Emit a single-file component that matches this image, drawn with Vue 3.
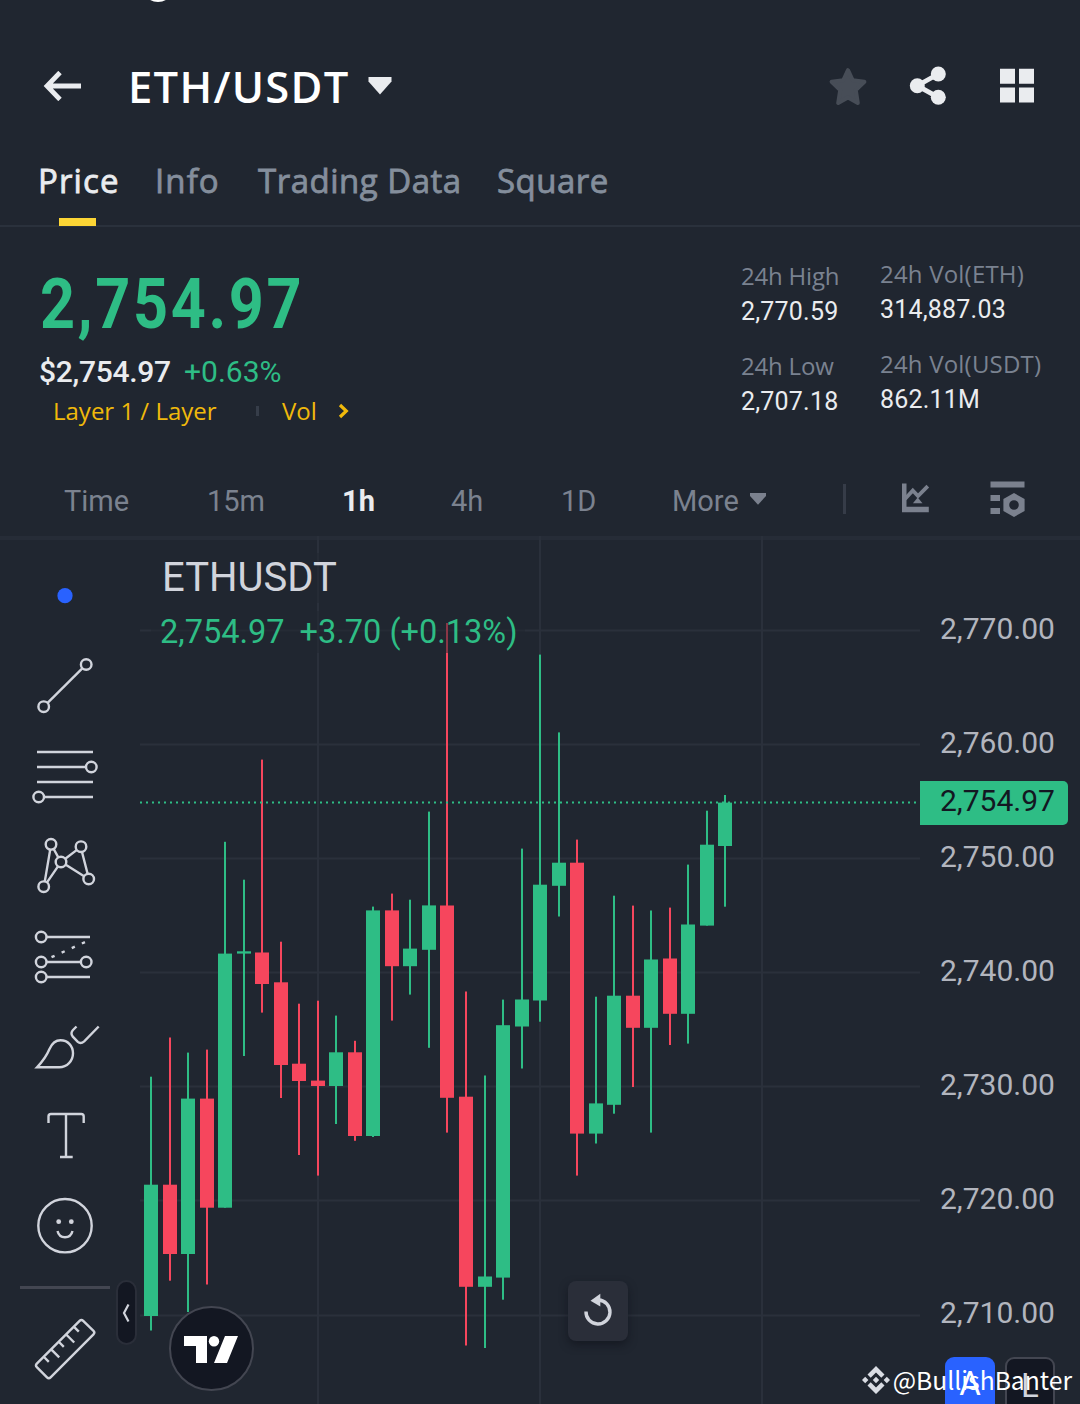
<template>
  <div class="page">
    <div class="status-mark"></div>

    <header class="header">
      <svg class="back" width="40" height="30" viewBox="0 0 40 30">
        <path
          d="M17 1.5L4 15l13 13.5M3 15h35"
          fill="none"
          stroke="#eaecef"
          stroke-width="4.8"
        />
      </svg>
      <h1>ETH/USDT</h1>
      <svg class="caret" width="24" height="18" viewBox="0 0 24 18">
        <path d="M.5 0h23v4.5L12 17.5.5 4.5z" fill="#eaecef" />
      </svg>
      <div class="actions">
        <svg width="46" height="46" viewBox="0 0 46 46">
          <path
            d="M23 7.2l4.6 10 11.8 1.5-8.6 8.3 2 13L23 34.5 13.2 40l2-13-8.6-8.3 11.8-1.5z"
            fill="#474d57"
            stroke="#474d57"
            stroke-width="4"
            stroke-linejoin="round"
          />
        </svg>
        <svg width="46" height="46" viewBox="0 0 46 46">
          <path
            d="M33.3 11L12.3 22.7l21 11.6"
            fill="none"
            stroke="#eaecef"
            stroke-width="4.8"
          />
          <circle cx="33.3" cy="11" r="7.5" fill="#eaecef" />
          <circle cx="12.3" cy="22.7" r="7.5" fill="#eaecef" />
          <circle cx="33.3" cy="34.3" r="7.5" fill="#eaecef" />
        </svg>
        <svg width="46" height="46" viewBox="0 0 46 46">
          <path
            d="M6 5.7h15v15H6zM25 5.7h15v15H25zM6 24.5h15v15H6zM25 24.5h15v15H25z"
            fill="#eaecef"
          />
        </svg>
      </div>
    </header>

    <nav class="tabs">
      <div
        v-for="tab in tabs"
        :key="tab"
        class="tab"
        :class="{ active: tab === activeTab }"
        @click="activeTab = tab"
      >
        <span>{{ tab }}</span>
      </div>
    </nav>

    <section class="ticker">
      <div class="price-box">
        <div class="price">2,754.97</div>
        <div class="sub-price">
          <span class="fiat">$2,754.97</span>
          <span class="percent">+0.63%</span>
        </div>
        <div class="tags">
          <span class="layer">Layer 1 / Layer</span>
          <i></i>
          <span>Vol</span>
          <svg width="12" height="16" viewBox="0 0 12 16">
            <path
              d="M2 2l6.3 6L2 14"
              fill="none"
              stroke="#f0b90b"
              stroke-width="3.2"
            />
          </svg>
        </div>
      </div>
      <div class="stats">
        <div v-for="item in stats" :key="item.label" class="stat">
          <div class="label">{{ item.label }}</div>
          <div class="value">{{ item.value }}</div>
        </div>
      </div>
    </section>

    <div class="intervals">
      <span
        v-for="item in intervals"
        :key="item"
        :class="{ active: item === activeInterval }"
        @click="activeInterval = item"
        >{{ item }}</span
      >
      <span class="more">
        More
        <svg width="16" height="12" viewBox="0 0 16 12">
          <path d="M0 0h16v3L8 11.7 0 3z" fill="#7b818e" />
        </svg>
      </span>
      <i class="line"></i>
      <svg width="28" height="40" viewBox="0 0 28 40">
        <path d="M0 4.5h4.5v23.3h22.3v5.4H0z" fill="#7b818e" />
        <path
          d="M3 20l7.8-8.5 5.2 5.5 9.8-9.8"
          fill="none"
          stroke="#7b818e"
          stroke-width="3.8"
        />
        <path d="M15.7 18.5l4.8 5.8h-9.6z" fill="#7b818e" />
      </svg>
      <svg width="36" height="40" viewBox="0 0 36 40">
        <path
          d="M.5 2.5h34v6H.5zM.5 16H10v6H.5zM.5 29H10v6H.5z"
          fill="#7b818e"
        />
        <path
          d="M24 14l10.6 6v12L24 38l-10.6-6V20zM24 21.2a4.8 4.8 0 1 0 0 9.6a4.8 4.8 0 1 0 0-9.6z"
          fill="#7b818e"
          fill-rule="evenodd"
        />
      </svg>
    </div>

    <main class="chart">
      <!-- drawing tools -->
      <aside class="tools">
        <svg viewBox="0 0 90 90">
          <circle cx="45" cy="44.7" r="7.6" fill="#2962ff" />
        </svg>
        <svg viewBox="0 0 90 90" class="tool">
          <path d="M27.6 61.8l34.7-34.4" />
          <circle cx="23.7" cy="65.7" r="5.3" />
          <circle cx="66.2" cy="23.5" r="5.3" />
        </svg>
        <svg viewBox="0 0 90 90" class="tool">
          <path d="M17 21h56M17 36h49M17 51h56M24 66h49" />
          <circle cx="71.3" cy="36" r="5.3" />
          <circle cx="18.7" cy="66" r="5.3" />
        </svg>
        <svg viewBox="0 0 90 90" class="tool">
          <path
            d="M33.7 28l4.6 8.3M30.2 28.6l-5.4 31.8M27 61.4l11-16M45.3 37.7l11.3-8.6M62 31l5.6 21.8M45.8 43.8l18.3 11.4"
          />
          <circle cx="31" cy="23.3" r="5.3" />
          <circle cx="61" cy="25.7" r="5.3" />
          <circle cx="41" cy="41" r="5.3" />
          <circle cx="23.7" cy="65.7" r="5.3" />
          <circle cx="68.7" cy="58" r="5.3" />
        </svg>
        <svg viewBox="0 0 90 90" class="tool">
          <path d="M26.5 26H70M26.5 51H61M26.5 66H70" />
          <path d="M31.5 46.2L67 30.2" stroke-dasharray="3.4 7.7" />
          <circle cx="21.2" cy="26" r="5.3" />
          <circle cx="21.2" cy="51" r="5.3" />
          <circle cx="66.2" cy="51" r="5.3" />
          <circle cx="21.2" cy="66" r="5.3" />
        </svg>
        <svg viewBox="0 0 90 90" class="tool">
          <path
            d="M17 66.3C23 60 27 54 29.5 48C32 42.5 36 39.3 40.5 39.3C48 39.3 53 45 53 52.3C53 60 47 66.3 39.3 66.3z"
          />
          <path
            d="M56.5 25.5L53 29q-3 3.2-.2 6.7l5 5.2q2.9 2.4 6.4-.6l14.5-14.8"
          />
        </svg>
        <svg viewBox="0 0 90 90" class="tool">
          <path
            d="M28.5 32v-6.5q0-2.5 2.5-2.5h30.2q2.5 0 2.5 2.5V32M46 23v43M40 66h12.7"
          />
        </svg>
        <svg viewBox="0 0 90 90" class="tool">
          <circle cx="45" cy="44.7" r="26.7" />
          <path d="M37.5 50q1.5 6.3 7.5 6.3t7.5-6.3" />
          <circle class="eye" cx="38.7" cy="40.7" r="2.4" />
          <circle class="eye" cx="51.3" cy="40.7" r="2.4" />
        </svg>
        <hr />
        <svg viewBox="0 0 90 90" class="tool">
          <path
            d="M16.8 59.6L59.6 16.8q1.8-1.8 3.6 0l10.3 10q1.8 1.8 0 3.6L30.6 73.3q-1.8 1.8-3.6 0L16.8 63.2q-1.8-1.8 0-3.6zM24 53l4.8 4.8M31.2 45.4l8 8M39 38l4.8 4.8M46.2 30.5l8 8M54 22.8l4.8 4.8"
          />
        </svg>
      </aside>

      <!-- candles -->
      <div class="canvas">
        <svg width="780" height="868" viewBox="140 536 780 868">
          <path
            v-for="y in [630.5, 744.5, 858.5, 972.5, 1086.5, 1200.5, 1315.5]"
            :key="'h' + y"
            :d="`M140 ${y}h780`"
            stroke="#2a303b"
            stroke-width="1.8"
          />
          <path
            v-for="x in [318, 540, 762]"
            :key="'v' + x"
            :d="`M${x} 536v868`"
            stroke="#2a303b"
            stroke-width="2"
          />
          <g
            v-for="c in candles"
            :key="c[0]"
            :fill="c[5] ? '#2ebd85' : '#f6465d'"
          >
            <rect :x="c[0] - 1" :y="c[1]" width="2" :height="c[4] - c[1]" />
            <rect :x="c[0] - 7" :y="c[2]" width="14" :height="c[3] - c[2]" />
          </g>
          <path
            d="M140 802.5h780"
            stroke="#2ebd85"
            stroke-width="2"
            stroke-dasharray="2 4"
          />
        </svg>

        <div class="legend">
          <div class="symbol">ETHUSDT</div>
          <div class="change">
            <span>2,754.97</span><span>+3.70 (+0.13%)</span>
          </div>
        </div>

        <div class="collapse">
          <svg width="10" height="20" viewBox="0 0 10 20">
            <path
              d="M7.5 1.5L3 10l4.5 8.5"
              fill="none"
              stroke="#d1d4dc"
              stroke-width="2.2"
            />
          </svg>
        </div>

        <div class="logo">
          <svg width="54" height="28" viewBox="0 0 54 28">
            <path d="M0 0h23v27H12V10H0zM41 0h13L43 27H30z" fill="#fff" />
            <circle cx="30" cy="5.2" r="5.2" fill="#fff" />
          </svg>
        </div>

        <div class="reset">
          <svg width="40" height="40" viewBox="0 0 40 40">
            <path
              d="M8 20.5a12 12 0 1 0 12.5-11.5"
              fill="none"
              stroke="#d1d4dc"
              stroke-width="3.4"
            />
            <path d="M22.3 2.8v12.6L12.5 9.8z" fill="#d1d4dc" />
          </svg>
        </div>
      </div>

      <!-- price axis -->
      <div class="axis">
        <div v-for="p in axis" :key="p" class="axis-price">{{ p }}</div>
        <div class="current">2,754.97</div>
        <div class="scale">
          <span class="auto">A</span>
          <span class="log">L</span>
        </div>
      </div>

      <div class="watermark">
        <svg width="28" height="28" viewBox="0 0 28 28" fill="#d9dce3">
          <path
            d="M14 0l8.5 8.5-3.2 3.2L14 6.4l-5.3 5.3-3.2-3.2zM14 28l8.5-8.5-3.2-3.2L14 21.6l-5.3-5.3-3.2 3.2zM14 10.8l3.2 3.2-3.2 3.2-3.2-3.2zM3.2 10.8L6.4 14l-3.2 3.2L0 14zM24.8 10.8L28 14l-3.2 3.2-3.2-3.2z"
          />
        </svg>
        <span>@BullishBanter</span>
      </div>
    </main>
  </div>
</template>

<script setup>
import { ref } from "vue";

const tabs = ["Price", "Info", "Trading Data", "Square"];
const activeTab = ref("Price");

const intervals = ["Time", "15m", "1h", "4h", "1D"];
const activeInterval = ref("1h");

const stats = [
  { label: "24h High", value: "2,770.59" },
  { label: "24h Vol(ETH)", value: "314,887.03" },
  { label: "24h Low", value: "2,707.18" },
  { label: "24h Vol(USDT)", value: "862.11M" },
];

const axis = [
  "2,770.00",
  "2,760.00",
  "2,750.00",
  "2,740.00",
  "2,730.00",
  "2,720.00",
  "2,710.00",
];

// x, high, body top, body bottom, low, up
const candles = [
  [151, 1076.7, 1184.7, 1316, 1330.5, 1],
  [170, 1037.5, 1184.7, 1254, 1280.7, 0],
  [188, 1052.6, 1098.6, 1254, 1312, 1],
  [207, 1049.6, 1098.6, 1207.7, 1284.5, 0],
  [225, 841.8, 953.6, 1207.7, 1207.7, 1],
  [244, 879.7, 951.3, 953.6, 1056, 1],
  [262, 759.6, 952.5, 984, 1012.6, 0],
  [281, 941.7, 982.3, 1065, 1098, 0],
  [299, 1003.7, 1063.7, 1081, 1155, 0],
  [318, 1000.7, 1080.6, 1086, 1175.6, 0],
  [336, 1015.6, 1052.3, 1086, 1124, 1],
  [355, 1040.8, 1052.3, 1136, 1140.8, 0],
  [373, 906.6, 910.4, 1136, 1137, 1],
  [392, 893.6, 910.4, 966.2, 1020.6, 0],
  [410, 899.7, 948.6, 966.2, 994.6, 1],
  [429, 811.6, 905.4, 949.8, 1047.8, 1],
  [447, 623, 905.5, 1097.8, 1132.6, 0],
  [466, 991.5, 1096.7, 1286.8, 1345.5, 0],
  [485, 1075.5, 1276.5, 1286.8, 1348, 1],
  [503, 999.6, 1025.2, 1277.6, 1299.7, 1],
  [522, 848.6, 999.5, 1026.5, 1068.5, 1],
  [540, 654.6, 884.7, 1000.5, 1021.7, 1],
  [559, 732.4, 862.7, 885.8, 916.5, 1],
  [577, 839.6, 862.7, 1133.6, 1175.6, 0],
  [596, 996.7, 1103.4, 1133.6, 1143.5, 1],
  [614, 895.7, 995.7, 1104.8, 1113.7, 1],
  [633, 905.6, 995.7, 1027.8, 1087, 0],
  [651, 910.5, 959.5, 1027.8, 1132.6, 1],
  [670, 907.6, 958.5, 1013.8, 1045, 0],
  [688, 864.6, 924.5, 1013.8, 1043.6, 1],
  [707, 810.7, 844.7, 925.6, 925.6, 1],
  [725, 795, 802.6, 846, 906.7, 1],
];
</script>

<style>
body {
  margin: 0;
  background-color: #202630;
}
</style>

<style scoped>
.page {
  position: relative;
  width: 1080px;
  height: 1404px;
  overflow: hidden;
  background-color: #202630;
  color: #eaecef;
  font-family: Roboto, sans-serif;
}
.page svg {
  display: block;
  flex: none;
}
.status-mark {
  position: absolute;
  top: -18px;
  left: 145px;
  width: 26px;
  height: 20px;
  border-radius: 50%;
  background-color: #fff;
}
.header {
  display: flex;
  align-items: center;
  box-sizing: border-box;
  height: 140px;
  padding: 34px 40px 2px 43px;
}
.header h1 {
  margin: 0 0 0 45px;
  width: 222px;
  color: #fff;
  font-family: "Open Sans", sans-serif;
  font-size: 43.5px;
  font-weight: 600;
  letter-spacing: 1.3px;
  white-space: nowrap;
}
.caret {
  margin-left: 18px;
}
.actions {
  display: flex;
  margin-left: auto;
}
.actions svg + svg {
  margin-left: 34.5px;
}
.actions svg + svg + svg {
  margin-left: 43px;
}
.tabs {
  display: grid;
  grid-template-columns: 117px 103px 239px auto;
  box-sizing: border-box;
  height: 87px;
  padding: 17px 0 0 38px;
  border-bottom: 2px solid #2a313c;
  color: #848e9c;
  font-family: "Open Sans", sans-serif;
  font-size: 33px;
  line-height: 48px;
  letter-spacing: 0.5px;
  white-space: nowrap;
  -webkit-text-stroke: 0.8px currentColor;
}
.tab {
  position: relative;
}
.tab:nth-child(-n + 2) {
  letter-spacing: 1.1px;
}
.tab.active {
  color: #eaecef;
}
.tab.active::after {
  content: "";
  position: absolute;
  left: 21px;
  bottom: -1px;
  width: 37px;
  height: 8px;
  background-color: #fcd535;
}
.ticker {
  display: flex;
  justify-content: space-between;
  box-sizing: border-box;
  height: 235px;
  padding: 32px 0 0 39px;
}
.price {
  height: 92px;
  padding-left: 1px;
  color: #2ebd85;
  font-size: 69.5px;
  font-weight: 700;
  line-height: 92px;
  letter-spacing: 3px;
  transform: scaleX(0.88);
  transform-origin: left;
}
.sub-price {
  display: flex;
  font-size: 30px;
  font-weight: 500;
  line-height: 42px;
}
.fiat {
  width: 145px;
  letter-spacing: -0.3px;
}
.percent {
  color: #2ebd85;
  font-weight: 400;
}
.tags {
  display: flex;
  align-items: center;
  padding-left: 14px;
  color: #f0b90b;
  font-family: "Open Sans", sans-serif;
  font-size: 24px;
  line-height: 36px;
}
.layer {
  width: 203px;
}
.tags i {
  width: 3px;
  height: 10px;
  margin-right: 23px;
  background-color: #363d49;
}
.tags svg {
  margin-left: 21px;
}
.stats {
  display: grid;
  grid-template-columns: 139px 200px;
  grid-auto-rows: 90px;
}
.stat:nth-child(odd) {
  padding-top: 2px;
}
.label {
  margin-top: -1px;
  color: #7a8290;
  font-family: "Open Sans", sans-serif;
  font-size: 24px;
  line-height: 32px;
  letter-spacing: -0.2px;
}
.stat:nth-child(even) .label {
  letter-spacing: 0.2px;
}
.value {
  font-size: 25px;
  line-height: 40px;
  letter-spacing: 0.2px;
}
.intervals {
  display: grid;
  grid-template-columns: 143px 135px 109px 110px 111px 169.5px 59.5px 88px 40px;
  align-items: center;
  box-sizing: border-box;
  height: 74px;
  padding: 0 0 0 65px;
  color: #7b828f;
  font-size: 29px;
}
.intervals span {
  margin-left: -1px;
  padding-top: 3px;
}
.intervals .active {
  color: #eaecef;
  font-weight: 700;
}
.more {
  display: flex;
  align-items: center;
  gap: 11px;
}
.more svg {
  margin-top: -4px;
}
.line {
  width: 3px;
  height: 30px;
  background-color: #363c48;
}
.intervals > svg {
  margin-left: -0.5px;
}
.chart {
  position: relative;
  display: flex;
  height: 868px;
}
.chart::before {
  content: "";
  position: absolute;
  top: 0;
  width: 100%;
  height: 4px;
  background-color: #262c37;
}
.tools {
  box-sizing: border-box;
  width: 140px;
  padding: 15px 30px 0 20px;
}
.tools svg {
  width: 90px;
  height: 90px;
}
.tools hr {
  height: 3px;
  margin: 15px 0;
  border: 0;
  background-color: #434651;
}
.tool {
  fill: none;
  stroke: #d1d4dc;
  stroke-width: 2.4;
}
.tool .eye {
  fill: #d1d4dc;
  stroke: none;
}
.canvas {
  position: relative;
  width: 780px;
}
.legend {
  position: absolute;
  top: 17px;
  left: 11px;
  color: #d1d4dc;
}
.symbol,
.change {
  width: max-content;
  padding-left: 9px;
  background-color: rgba(32, 38, 48, 0.5);
}
.symbol {
  padding: 0 8px 0 11px;
  font-size: 40px;
  line-height: 50px;
}
.change {
  display: flex;
  gap: 15px;
  margin-top: 8px;
  padding-right: 8px;
  color: #2ebd85;
  font-size: 32.5px;
  line-height: 42px;
}
.collapse {
  position: absolute;
  top: 744px;
  left: -24.5px;
  display: flex;
  align-items: center;
  justify-content: center;
  width: 17px;
  height: 61px;
  border: 2px solid #2a2e39;
  border-radius: 11px;
  background-color: #131722;
}
.logo {
  position: absolute;
  top: 770px;
  left: 29px;
  display: flex;
  align-items: center;
  justify-content: center;
  box-sizing: border-box;
  width: 84.5px;
  height: 84.5px;
  padding-top: 3px;
  border: 2.5px solid #434651;
  border-radius: 50%;
  background-color: #131722;
}
.reset {
  position: absolute;
  top: 745px;
  left: 428px;
  display: flex;
  align-items: center;
  justify-content: center;
  width: 60px;
  height: 60px;
  border-radius: 8px;
  background-color: #2a2e39;
  box-shadow: 0 4px 8px rgba(12, 14, 21, 0.5);
}
.axis {
  position: relative;
  width: 160px;
  padding-top: 36px;
  font-size: 30px;
}
.axis-price {
  height: 114px;
  padding-left: 20px;
  color: #b2b5be;
  line-height: 114px;
}
.current {
  position: absolute;
  top: 245px;
  left: 0;
  width: 128px;
  height: 44px;
  padding-left: 20px;
  border-radius: 0 5px 5px 0;
  background-color: #2ebd85;
  color: #131722;
  line-height: 39px;
}
.scale {
  position: absolute;
  top: 821px;
  left: 25px;
  display: flex;
  gap: 10px;
}
.scale span {
  box-sizing: border-box;
  width: 50px;
  height: 56px;
  border-radius: 9px;
  font-size: 33px;
  line-height: 54px;
  text-align: center;
}
.auto {
  background-color: #2962ff;
  color: #fff;
}
.log {
  border: 2px solid #434651;
  background-color: #131722;
  color: #d1d4dc;
}
.watermark {
  position: absolute;
  right: 8px;
  bottom: 5px;
  display: flex;
  align-items: center;
  gap: 3px;
  color: #fff;
  font-family: "Noto Sans CJK SC", sans-serif;
  font-size: 24.7px;
  line-height: 40px;
}
.watermark svg {
  margin-top: 2px;
}
</style>
